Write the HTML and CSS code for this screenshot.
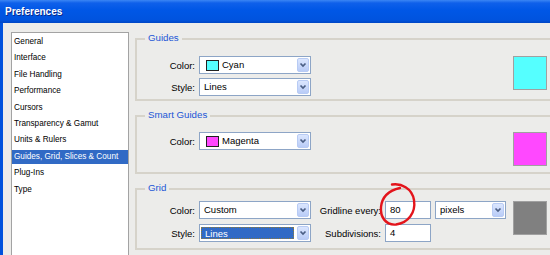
FILE: index.html
```html
<!DOCTYPE html>
<html lang="en">
<head>
  <meta charset="UTF-8">
  <title>Preferences</title>
  <link rel="stylesheet" href="styles.css">
</head>
<body>
  <div class="window">
    <div class="titlebar">Preferences</div>
    <div class="content">
      <ul class="nav">
        <li>General</li>
        <li>Interface</li>
        <li>File Handling</li>
        <li>Performance</li>
        <li>Cursors</li>
        <li>Transparency &amp; Gamut</li>
        <li>Units &amp; Rulers</li>
        <li class="active">Guides, Grid, Slices &amp; Count</li>
        <li>Plug-Ins</li>
        <li>Type</li>
      </ul>

      <div class="panel">
        <!-- Guides -->
        <div class="group guides">
          <span class="group-title">Guides</span>
          <div class="group-inner">
            <div class="fields">
              <div class="row">
                <span class="lbl">Color:</span>
                <div class="select"><span class="chip cyan"></span>Cyan<span class="arrow"><svg width="12" height="14" viewBox="0 0 12 14"><path d="M3.5 5.5 L6 8 L8.5 5.5" /></svg></span></div>
              </div>
              <div class="row">
                <span class="lbl">Style:</span>
                <div class="select">Lines<span class="arrow"><svg width="12" height="14" viewBox="0 0 12 14"><path d="M3.5 5.5 L6 8 L8.5 5.5" /></svg></span></div>
              </div>
            </div>
            <div class="swatch cyan"></div>
          </div>
        </div>

        <!-- Smart Guides -->
        <div class="group smart">
          <span class="group-title">Smart Guides</span>
          <div class="group-inner">
            <div class="fields">
              <div class="row">
                <span class="lbl">Color:</span>
                <div class="select"><span class="chip magenta"></span>Magenta<span class="arrow"><svg width="12" height="14" viewBox="0 0 12 14"><path d="M3.5 5.5 L6 8 L8.5 5.5" /></svg></span></div>
              </div>
            </div>
            <div class="swatch magenta"></div>
          </div>
        </div>

        <!-- Grid -->
        <div class="group grid">
          <span class="group-title">Grid</span>
          <div class="group-inner">
            <div class="fields">
              <div class="row">
                <span class="lbl">Color:</span>
                <div class="select">Custom<span class="arrow"><svg width="12" height="14" viewBox="0 0 12 14"><path d="M3.5 5.5 L6 8 L8.5 5.5" /></svg></span></div>
                <span class="lbl2">Gridline every:</span>
                <div class="input">80</div>
                <div class="select small">pixels<span class="arrow"><svg width="12" height="14" viewBox="0 0 12 14"><path d="M3.5 5.5 L6 8 L8.5 5.5" /></svg></span></div>
              </div>
              <div class="row">
                <span class="lbl">Style:</span>
                <div class="select focused"><span class="sel-text">Lines</span><span class="arrow"><svg width="12" height="14" viewBox="0 0 12 14"><path d="M3.5 5.5 L6 8 L8.5 5.5" /></svg></span></div>
                <span class="lbl2">Subdivisions:</span>
                <div class="input">4</div>
              </div>
            </div>
            <div class="swatch gray"></div>
          </div>
        </div>
      </div>
    </div>
  </div>

  <!-- red hand-drawn mark around the gridline value -->
  <svg class="mark" width="550" height="255" viewBox="0 0 550 255">
    <path d="M392 184.5 C401 183, 412 188, 414 200 C416 213, 408 223, 396 224.5 C386 225.5, 380 217, 381 207 C382 197, 389 190.5, 400 188" />
  </svg>
</body>
</html>
```

FILE: styles.css
```css
body {
  margin: 0;
  width: 550px;
  height: 255px;
  overflow: hidden;
  position: relative;
  font-family: "Liberation Sans", Arial, sans-serif;
  font-size: 9.5px;
  color: #000;
  background: #ececea;
}

.window {
  display: flex;
  flex-direction: column;
  height: 255px;
  overflow: hidden;
}

/* ---- title bar ---- */
.titlebar {
  height: 23px;
  line-height: 23px;
  padding-left: 5px;
  flex-shrink: 0;
  color: #fff;
  font-weight: bold;
  font-size: 10px;
  text-shadow: 1px 1px 0 #0a2a8a;
  background: linear-gradient(to bottom, #3b86f4 0, #0f60ea 3px, #0057e6 10px, #0053de 20px, #0046c4 23px);
}

.content {
  flex: 1;
  min-height: 0;
  overflow: hidden;
  display: flex;
  align-items: flex-start;
  border-left: 3px solid #0052dd;
  background: #ececea;
}

/* ---- left list ---- */
.nav {
  flex-shrink: 0;
  list-style: none;
  margin: 9px 0 0 8px;
  padding: 2px 0 0;
  width: 118px;
  height: 240px;
  box-sizing: border-box;
  background: #fff;
  border: 1px solid #a3a3a3;
  font-size: 8.2px;
}
.nav li {
  height: 14px;
  line-height: 14px;
  margin-bottom: 2.4px;
  padding-left: 2px;
  white-space: nowrap;
}
.nav li.active {
  background: #316ac5;
  color: #fff;
}

/* ---- right panel ---- */
.panel {
  flex-shrink: 0;
  margin: 15px 0 0 6px;
}

.group {
  position: relative;
  width: 420px;
  box-sizing: border-box;
  border: 2px solid #d6d3ca;
  padding-right: 6px;
}
.group + .group {
  margin-top: 14px;
}
.guides { padding-top: 16px; padding-bottom: 3px; }
.smart { padding-top: 15px; padding-bottom: 6px; }
.grid { padding-top: 11px; padding-bottom: 6px; }

.group-title {
  position: absolute;
  top: -8px;
  left: 8px;
  padding: 0 3px;
  line-height: 12px;
  font-size: 9.7px;
  color: #2256d6;
  background: #ececea;
}

.group-inner {
  display: flex;
  align-items: flex-start;
}
.fields {
  display: flex;
  flex-direction: column;
  gap: 4px;
}
.grid .fields {
  gap: 5px;
}
.row {
  display: flex;
  align-items: center;
}
.lbl {
  width: 58px;
  margin-right: 4px;
  text-align: right;
}
.lbl2 {
  width: 70px;
  margin-right: 4px;
  text-align: right;
  white-space: nowrap;
}

/* ---- XP style combo box ---- */
.select {
  position: relative;
  width: 112px;
  height: 18px;
  box-sizing: border-box;
  border: 1px solid #8da5c6;
  background: #fff;
  padding-left: 4px;
  line-height: 16px;
  display: flex;
  align-items: center;
}
.select.small {
  width: 71px;
  margin-left: 4px;
}
.arrow {
  position: absolute;
  right: 1px;
  top: 1px;
  width: 12px;
  height: 14px;
  box-sizing: border-box;
  border: 1px solid #b8cbf4;
  border-radius: 2px;
  background: linear-gradient(to bottom, #dbe6fe, #b9ccf7);
}
.arrow svg {
  position: absolute;
  left: -1px;
  top: -1px;
}
.arrow path {
  fill: none;
  stroke: #4b5f85;
  stroke-width: 1.7;
}

.select.focused {
  padding-left: 1px;
}
.sel-text {
  display: block;
  width: 93px;
  height: 12px;
  line-height: 12px;
  box-sizing: border-box;
  padding-left: 3px;
  background: #316ac5;
  color: #fff;
  border: 1px dotted #8f7b3a;
}

.chip {
  display: inline-block;
  width: 13px;
  height: 11px;
  box-sizing: border-box;
  border: 1px solid #222;
  margin: 0 3px 0 2px;
}

.input {
  width: 46px;
  height: 18px;
  box-sizing: border-box;
  border: 1px solid #8da5c6;
  background: #fff;
  padding-left: 4px;
  line-height: 16px;
}

.swatch {
  width: 34px;
  height: 34px;
  box-sizing: border-box;
  border: 1px solid #a0a0a0;
  margin-left: auto;
}

.cyan { background: #55ffff; }
.magenta { background: #ff48ff; }
.gray { background: #808080; }

/* red circle */
.mark {
  position: absolute;
  left: 0;
  top: 0;
  pointer-events: none;
}
.mark path {
  fill: none;
  stroke: #e3141b;
  stroke-width: 2.4;
  stroke-linecap: round;
}
```
